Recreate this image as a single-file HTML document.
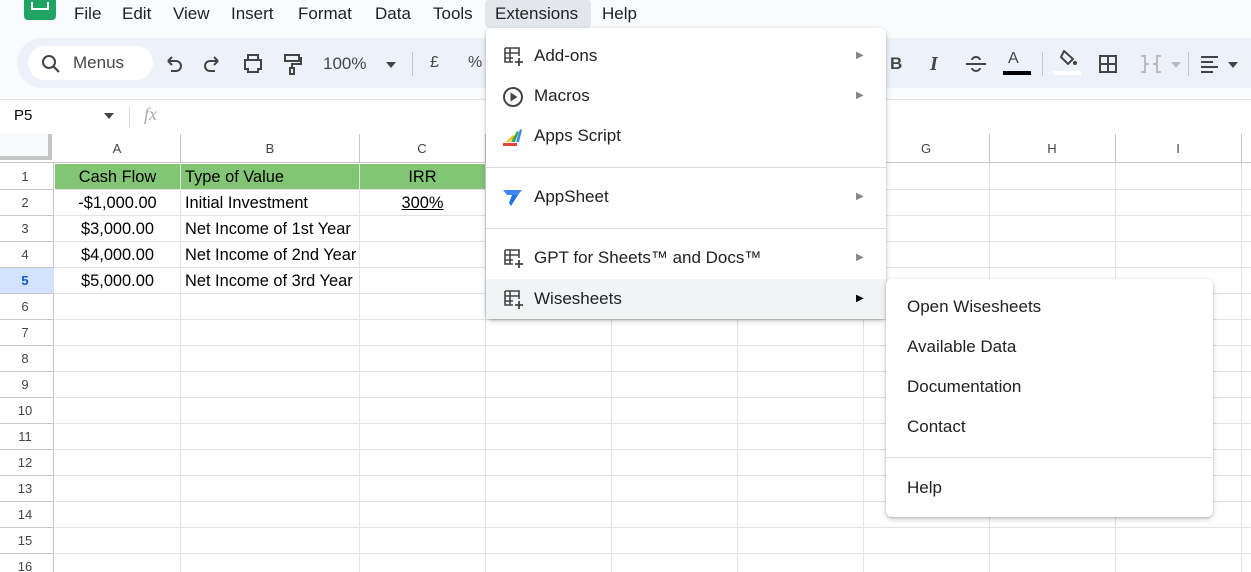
<!DOCTYPE html>
<html><head><meta charset="utf-8"><style>
*{margin:0;padding:0;box-sizing:border-box}
body{width:1251px;height:572px;overflow:hidden;background:#f9fbfd;font-family:"Liberation Sans",sans-serif;position:relative;color:#202124}
.a{position:absolute}
.menu span{position:absolute;top:4px;font-size:17px;color:#202124}
.tb{position:absolute;font-size:17px;color:#444746}
.grid{position:absolute;left:0;top:134px;width:1251px;height:438px;background:#fff}
.cell{position:absolute;font-size:16.4px;color:#000;line-height:26px;white-space:nowrap;overflow:hidden}
.mi{position:absolute;left:0;width:400px;height:40px;font-size:17px;color:#202124;line-height:40px}
.mi .t{position:absolute;left:48px}
.mi .ar{position:absolute;left:370px;font-size:10px;color:#888}
.si{position:absolute;left:21px;font-size:17px;color:#202124}
</style></head><body>
<div class="a" style="left:24px;top:0;width:32px;height:20px;background:#1fa463;border-radius:0 0 4px 4px"></div>
<div class="a" style="left:31px;top:2px;width:18px;height:8px;border:2px solid #fff;border-top:none"></div>
<div class="menu a" style="left:0;top:0;width:700px;height:30px">
<span style="left:74px">File</span><span style="left:122px">Edit</span><span style="left:173px">View</span><span style="left:231px">Insert</span><span style="left:298px">Format</span><span style="left:375px">Data</span><span style="left:433px">Tools</span>
<div class="a" style="left:485px;top:0;width:106px;height:28px;background:#e3e6ea;border-radius:4px"></div>
<span style="left:495px">Extensions</span><span style="left:602px">Help</span></div>
<div class="a" style="left:17px;top:38px;width:1260px;height:50px;background:#edf2fa;border-radius:25px"></div>
<div class="a" style="left:28px;top:46px;width:125px;height:34px;background:#fff;border-radius:17px"></div>
<svg class="a" style="left:40px;top:53px" width="22" height="22" viewBox="0 0 22 22"><circle cx="9" cy="9" r="6" fill="none" stroke="#444" stroke-width="2"/><path d="M13.5 13.5L19 19" stroke="#444" stroke-width="2.2"/></svg>
<div class="tb" style="left:73px;top:53px">Menus</div>
<svg class="a" style="left:164px;top:54px" width="20" height="20"><path d="M4 7h8a5 5 0 010 10H7M4 7l4-4M4 7l4 4" fill="none" stroke="#444" stroke-width="2"/></svg>
<svg class="a" style="left:202px;top:54px" width="20" height="20"><path d="M16 7H8a5 5 0 000 10h5M16 7l-4-4M16 7l-4 4" fill="none" stroke="#444" stroke-width="2"/></svg>
<svg class="a" style="left:242px;top:52px" width="22" height="22"><path d="M6 3h10v5H6zM3 8h16v9h-3v3H6v-3H3z" fill="none" stroke="#444" stroke-width="2"/></svg>
<svg class="a" style="left:282px;top:52px" width="22" height="24"><path d="M3 3h14v6H3zM17 6h2v6h-9v4M8 16h4v6H8z" fill="none" stroke="#444" stroke-width="2"/></svg>
<div class="tb" style="left:323px;top:54px">100%</div>
<div class="a" style="left:386px;top:62px;border:5px solid transparent;border-top:6px solid #444"></div>
<div class="a" style="left:412px;top:52px;width:1px;height:24px;background:#c4c7c5"></div>
<div class="tb" style="left:430px;top:54px;font-size:16px">£</div>
<div class="tb" style="left:468px;top:54px;font-size:16px">%</div>
<div class="tb" style="left:890px;top:54px;font-weight:bold">B</div>
<div class="tb" style="left:930px;top:53px;font-style:italic;font-family:'Liberation Serif';font-size:20px;font-weight:bold">I</div>
<svg class="a" style="left:965px;top:54px" width="22" height="20"><path d="M1 10h20M15 6a4 3 0 00-8 0M7 14a4 3 0 008 0" fill="none" stroke="#444" stroke-width="2"/></svg>
<div class="tb" style="left:1008px;top:50px;font-size:16px">A</div>
<div class="a" style="left:1003px;top:71px;width:28px;height:4px;background:#000"></div>
<div class="a" style="left:1042px;top:52px;width:1px;height:24px;background:#c4c7c5"></div>
<svg class="a" style="left:1056px;top:50px" width="24" height="18"><path d="M8 1l9 8-5 5-7-7z" fill="none" stroke="#444" stroke-width="2"/><circle cx="19" cy="13" r="2" fill="#444"/></svg>
<div class="a" style="left:1053px;top:71px;width:28px;height:4px;background:#fff"></div>
<svg class="a" style="left:1098px;top:54px" width="20" height="20"><path d="M2 2h16v16H2zM10 2v16M2 10h16" fill="none" stroke="#444" stroke-width="2"/></svg>
<svg class="a" style="left:1140px;top:54px" width="22" height="20"><path d="M1 2h4v16H1M21 2h-4v16h4M5 10h4M17 10h-4" fill="none" stroke="#bbb" stroke-width="2"/></svg>
<div class="a" style="left:1171px;top:62px;border:5px solid transparent;border-top:6px solid #bbb"></div>
<div class="a" style="left:1188px;top:52px;width:1px;height:24px;background:#c4c7c5"></div>
<svg class="a" style="left:1200px;top:54px" width="20" height="20"><path d="M1 3h17M1 8h12M1 13h17M1 18h12" stroke="#444" stroke-width="2"/></svg>
<div class="a" style="left:1228px;top:62px;border:5px solid transparent;border-top:6px solid #444"></div>
<div class="a" style="left:0;top:99px;width:1251px;height:35px;background:#fff;border-top:1px solid #e1e3e1"></div>
<div class="a" style="left:14px;top:107px;font-size:15px;color:#000">P5</div>
<div class="a" style="left:104px;top:113px;border:5px solid transparent;border-top:6px solid #444"></div>
<div class="a" style="left:129px;top:106px;width:1px;height:22px;background:#ddd"></div>
<div class="a" style="left:144px;top:104px;font-size:18px;color:#aaa;font-style:italic;font-family:'Liberation Serif'">fx</div>
<div class="grid">
<div class="a" style="left:0;top:0;width:1251px;height:29px;background:#fff;border-bottom:1px solid #c4c7c5"></div>
<div class="a" style="left:0;top:0;width:52px;height:26px;background:#f8f9fa;border-right:4px solid #c4c7c5;border-bottom:4px solid #c4c7c5"></div>
<div class="a" style="left:0;top:29px;width:54px;height:409px;background:#fff;border-right:1px solid #c4c7c5"></div>
<div class="a" style="left:0;top:134px;width:54px;height:26px;background:#d3e3fd"></div>
<div class="a" style="left:55px;top:30px;width:431px;height:25px;background:#82c574"></div>
<svg class="a" style="left:0;top:0" width="1251" height="438">
<g stroke="#e1e3e1" stroke-width="1">
<line x1="55" y1="55.5" x2="1251" y2="55.5"/><line x1="55" y1="81.5" x2="1251" y2="81.5"/><line x1="55" y1="107.5" x2="1251" y2="107.5"/><line x1="55" y1="133.5" x2="1251" y2="133.5"/><line x1="55" y1="159.5" x2="1251" y2="159.5"/><line x1="55" y1="185.5" x2="1251" y2="185.5"/><line x1="55" y1="211.5" x2="1251" y2="211.5"/><line x1="55" y1="237.5" x2="1251" y2="237.5"/><line x1="55" y1="263.5" x2="1251" y2="263.5"/><line x1="55" y1="289.5" x2="1251" y2="289.5"/><line x1="55" y1="315.5" x2="1251" y2="315.5"/><line x1="55" y1="341.5" x2="1251" y2="341.5"/><line x1="55" y1="367.5" x2="1251" y2="367.5"/><line x1="55" y1="393.5" x2="1251" y2="393.5"/><line x1="55" y1="419.5" x2="1251" y2="419.5"/>
<line x1="180.5" y1="29" x2="180.5" y2="438"/><line x1="359.5" y1="29" x2="359.5" y2="438"/><line x1="485.5" y1="29" x2="485.5" y2="438"/><line x1="611.5" y1="29" x2="611.5" y2="438"/><line x1="737.5" y1="29" x2="737.5" y2="438"/><line x1="863.5" y1="29" x2="863.5" y2="438"/><line x1="989.5" y1="29" x2="989.5" y2="438"/><line x1="1115.5" y1="29" x2="1115.5" y2="438"/><line x1="1241.5" y1="29" x2="1241.5" y2="438"/>
</g>
<g stroke="#c4c7c5"><line x1="180.5" y1="0" x2="180.5" y2="29"/><line x1="359.5" y1="0" x2="359.5" y2="29"/><line x1="485.5" y1="0" x2="485.5" y2="29"/><line x1="989.5" y1="0" x2="989.5" y2="29"/><line x1="1115.5" y1="0" x2="1115.5" y2="29"/><line x1="1241.5" y1="0" x2="1241.5" y2="29"/>
<line x1="0" y1="55.5" x2="54" y2="55.5"/><line x1="0" y1="81.5" x2="54" y2="81.5"/><line x1="0" y1="107.5" x2="54" y2="107.5"/><line x1="0" y1="133.5" x2="54" y2="133.5"/><line x1="0" y1="159.5" x2="54" y2="159.5"/><line x1="0" y1="185.5" x2="54" y2="185.5"/><line x1="0" y1="211.5" x2="54" y2="211.5"/><line x1="0" y1="237.5" x2="54" y2="237.5"/><line x1="0" y1="263.5" x2="54" y2="263.5"/><line x1="0" y1="289.5" x2="54" y2="289.5"/><line x1="0" y1="315.5" x2="54" y2="315.5"/><line x1="0" y1="341.5" x2="54" y2="341.5"/><line x1="0" y1="367.5" x2="54" y2="367.5"/><line x1="0" y1="393.5" x2="54" y2="393.5"/><line x1="0" y1="419.5" x2="54" y2="419.5"/></g>
<g font-family="Liberation Sans" font-size="13" fill="#444" text-anchor="middle">
<text x="117" y="19">A</text><text x="270" y="19">B</text><text x="422" y="19">C</text><text x="926" y="19">G</text><text x="1052" y="19">H</text><text x="1178" y="19">I</text>
<text x="25" y="47">1</text><text x="25" y="73">2</text><text x="25" y="99">3</text><text x="25" y="125">4</text><text x="25" y="151" font-weight="bold" fill="#0b57d0">5</text><text x="25" y="177">6</text><text x="25" y="203">7</text><text x="25" y="229">8</text><text x="25" y="255">9</text><text x="25" y="281">10</text><text x="25" y="307">11</text><text x="25" y="333">12</text><text x="25" y="359">13</text><text x="25" y="385">14</text><text x="25" y="411">15</text><text x="25" y="437">16</text>
</g>
</svg>
<div class="cell" style="left:55px;top:30px;width:125px;text-align:center">Cash Flow</div>
<div class="cell" style="left:185px;top:30px">Type of Value</div>
<div class="cell" style="left:360px;top:30px;width:125px;text-align:center">IRR</div>
<div class="cell" style="left:55px;top:56px;width:125px;text-align:center">-$1,000.00</div>
<div class="cell" style="left:185px;top:56px">Initial Investment</div>
<div class="cell" style="left:360px;top:56px;width:125px;text-align:center;text-decoration:underline">300%</div>
<div class="cell" style="left:55px;top:82px;width:125px;text-align:center">$3,000.00</div>
<div class="cell" style="left:185px;top:82px;width:174px">Net Income of 1st Year</div>
<div class="cell" style="left:55px;top:108px;width:125px;text-align:center">$4,000.00</div>
<div class="cell" style="left:185px;top:108px;width:174px">Net Income of 2nd Year</div>
<div class="cell" style="left:55px;top:134px;width:125px;text-align:center">$5,000.00</div>
<div class="cell" style="left:185px;top:134px;width:174px">Net Income of 3rd Year</div>
</div>
<div class="a" style="left:486px;top:28px;width:400px;height:291px;background:#fff;border-radius:6px;box-shadow:0 2px 6px rgba(0,0,0,.2),0 1px 2px rgba(0,0,0,.15)">
<svg width="0" height="0" style="position:absolute"><defs><g id="ad"><path d="M1 1h14v8M1 1v14h8M1 6h14M1 11h8M6 1v14" fill="none" stroke="#444" stroke-width="1.6"/><path d="M15 11v8M11 15h8" stroke="#444" stroke-width="1.8"/></g></defs></svg>
<div class="mi" style="top:8px"><svg class="a" style="left:18px;top:11px" width="20" height="20"><use href="#ad"/></svg><span class="t">Add-ons</span><span class="ar">▶</span></div>
<div class="mi" style="top:48px"><svg class="a" style="left:16px;top:10px" width="22" height="22"><circle cx="11" cy="11" r="9" fill="none" stroke="#444" stroke-width="2"/><path d="M8.5 6.5v9l7-4.5z" fill="#444"/></svg><span class="t">Macros</span><span class="ar">▶</span></div>
<div class="mi" style="top:88px"><svg class="a" style="left:16px;top:11px" width="22" height="20"><path d="M1 16h14v3H1z" fill="#ea4335"/><path d="M4 15l7-7 2 2-6 5z" fill="#fbbc04"/><path d="M9 15l6-11 2 1-4 10z" fill="#34a853"/><path d="M14 15l4-13 2 1-3 12z" fill="#4285f4"/></svg><span class="t">Apps Script</span></div>
<div class="a" style="left:0;top:139px;width:400px;height:1px;background:#dadce0"></div>
<div class="mi" style="top:149px"><svg class="a" style="left:17px;top:12px" width="20" height="18"><path d="M0 1h19l-4 5H4z" fill="#4285f4"/><path d="M9 6h6l-7 11-2-3z" fill="#1a73e8"/></svg><span class="t">AppSheet</span><span class="ar">▶</span></div>
<div class="a" style="left:0;top:200px;width:400px;height:1px;background:#dadce0"></div>
<div class="mi" style="top:210px"><svg class="a" style="left:18px;top:11px" width="20" height="20"><use href="#ad"/></svg><span class="t">GPT for Sheets™ and Docs™</span><span class="ar">▶</span></div>
<div class="mi" style="top:251px;background:#f1f3f4"><svg class="a" style="left:18px;top:11px" width="20" height="20"><use href="#ad"/></svg><span class="t">Wisesheets</span><span class="ar" style="color:#000">▶</span></div>
</div>
<div class="a" style="left:886px;top:279px;width:327px;height:238px;background:#fff;border-radius:6px;box-shadow:0 2px 6px rgba(0,0,0,.2),0 1px 2px rgba(0,0,0,.15)">
<div class="si" style="top:18px">Open Wisesheets</div>
<div class="si" style="top:58px">Available Data</div>
<div class="si" style="top:98px">Documentation</div>
<div class="si" style="top:138px">Contact</div>
<div class="a" style="left:0;top:178px;width:327px;height:1px;background:#dadce0"></div>
<div class="si" style="top:199px">Help</div>
</div>
</body></html>
